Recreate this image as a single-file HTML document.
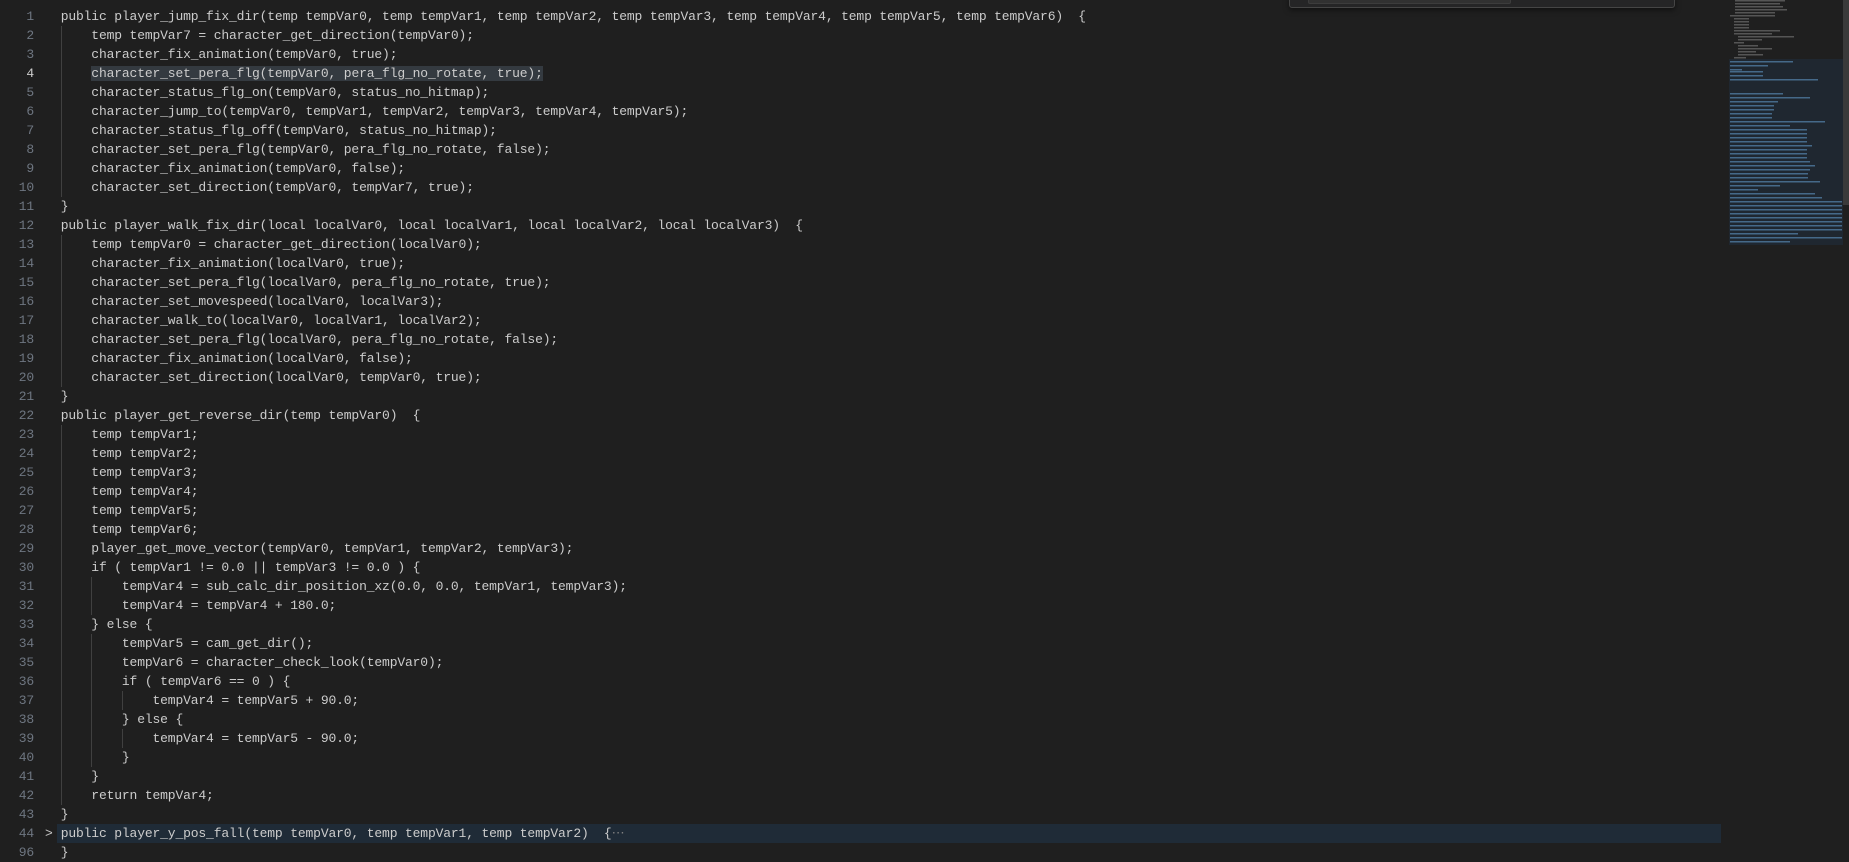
<!DOCTYPE html>
<html><head><meta charset="utf-8"><style>
html,body{margin:0;padding:0;width:1849px;height:855px;overflow:hidden;background:#1f1f1f}
.ed{position:absolute;left:0;top:0;width:1849px;height:855px}
.ln{position:absolute;left:0;width:34px;text-align:right;font:13px/19px "Liberation Mono",monospace;color:#6e7681;letter-spacing:-0.15px}
.ln .a{color:#cccccc}
.code{position:absolute;left:60.7px;top:7px;font:13px/19px "Liberation Mono",monospace;color:#cccccc;letter-spacing:-0.15px}
.code div{height:19px;background-repeat:no-repeat;white-space:pre}
.i1{background-image:linear-gradient(#404040,#404040);background-size:1px 19px;background-position:0 0}
.i2{background-image:linear-gradient(#404040,#404040),linear-gradient(#404040,#404040);background-size:1px 19px,1px 19px;background-position:0 0,30.6px 0}
.i3{background-image:linear-gradient(#404040,#404040),linear-gradient(#404040,#404040),linear-gradient(#404040,#404040);background-size:1px 19px,1px 19px,1px 19px;background-position:0 0,30.6px 0,61.2px 0}
.sel{background:#343a40}
.cur{position:absolute;left:57px;top:824px;width:1664px;height:19px;background:#1f2b37}
</style></head><body><div class="ed">
<div class="cur"></div>
<div class="ln" style="top:7px">1<br>2<br>3<br><span class="a">4</span><br>5<br>6<br>7<br>8<br>9<br>10<br>11<br>12<br>13<br>14<br>15<br>16<br>17<br>18<br>19<br>20<br>21<br>22<br>23<br>24<br>25<br>26<br>27<br>28<br>29<br>30<br>31<br>32<br>33<br>34<br>35<br>36<br>37<br>38<br>39<br>40<br>41<br>42<br>43<br>44<br>96</div>
<div style="position:absolute;left:45px;top:824px;font:13px/19px 'Liberation Mono',monospace;color:#c5c5c5">&gt;</div>
<div class="code"><div>public player_jump_fix_dir(temp tempVar0, temp tempVar1, temp tempVar2, temp tempVar3, temp tempVar4, temp tempVar5, temp tempVar6)  {</div><div class="i1">    temp tempVar7 = character_get_direction(tempVar0);</div><div class="i1">    character_fix_animation(tempVar0, true);</div><div class="i1">    <span class="sel">character_set_pera_flg(tempVar0, pera_flg_no_rotate, true);</span></div><div class="i1">    character_status_flg_on(tempVar0, status_no_hitmap);</div><div class="i1">    character_jump_to(tempVar0, tempVar1, tempVar2, tempVar3, tempVar4, tempVar5);</div><div class="i1">    character_status_flg_off(tempVar0, status_no_hitmap);</div><div class="i1">    character_set_pera_flg(tempVar0, pera_flg_no_rotate, false);</div><div class="i1">    character_fix_animation(tempVar0, false);</div><div class="i1">    character_set_direction(tempVar0, tempVar7, true);</div><div>}</div><div>public player_walk_fix_dir(local localVar0, local localVar1, local localVar2, local localVar3)  {</div><div class="i1">    temp tempVar0 = character_get_direction(localVar0);</div><div class="i1">    character_fix_animation(localVar0, true);</div><div class="i1">    character_set_pera_flg(localVar0, pera_flg_no_rotate, true);</div><div class="i1">    character_set_movespeed(localVar0, localVar3);</div><div class="i1">    character_walk_to(localVar0, localVar1, localVar2);</div><div class="i1">    character_set_pera_flg(localVar0, pera_flg_no_rotate, false);</div><div class="i1">    character_fix_animation(localVar0, false);</div><div class="i1">    character_set_direction(localVar0, tempVar0, true);</div><div>}</div><div>public player_get_reverse_dir(temp tempVar0)  {</div><div class="i1">    temp tempVar1;</div><div class="i1">    temp tempVar2;</div><div class="i1">    temp tempVar3;</div><div class="i1">    temp tempVar4;</div><div class="i1">    temp tempVar5;</div><div class="i1">    temp tempVar6;</div><div class="i1">    player_get_move_vector(tempVar0, tempVar1, tempVar2, tempVar3);</div><div class="i1">    if ( tempVar1 != 0.0 || tempVar3 != 0.0 ) {</div><div class="i2">        tempVar4 = sub_calc_dir_position_xz(0.0, 0.0, tempVar1, tempVar3);</div><div class="i2">        tempVar4 = tempVar4 + 180.0;</div><div class="i1">    } else {</div><div class="i2">        tempVar5 = cam_get_dir();</div><div class="i2">        tempVar6 = character_check_look(tempVar0);</div><div class="i2">        if ( tempVar6 == 0 ) {</div><div class="i3">            tempVar4 = tempVar5 + 90.0;</div><div class="i2">        } else {</div><div class="i3">            tempVar4 = tempVar5 - 90.0;</div><div class="i2">        }</div><div class="i1">    }</div><div class="i1">    return tempVar4;</div><div>}</div><div>public player_y_pos_fall(temp tempVar0, temp tempVar1, temp tempVar2)  {<span style="color:#808080">&#8943;</span></div><div>}</div></div>
<div style="position:absolute;left:1289px;top:-4px;width:384px;height:10px;background:#252526;border:1px solid #454545;border-radius:3px;box-shadow:0 2px 6px rgba(0,0,0,.5)"></div>
<div style="position:absolute;left:1308px;top:-2px;width:201px;height:4px;background:#313131;border:1px solid #3c3c3c;border-radius:2px"></div>
<svg style="position:absolute;left:1727px;top:0" width="122" height="855">
<g fill="#7a7a7a" opacity=".6">
<rect x="8" y="0" width="50" height="1.5"/><rect x="8" y="3" width="45" height="1.5"/><rect x="8" y="6" width="48" height="1.5"/><rect x="8" y="9" width="52" height="1.5"/><rect x="8" y="12" width="40" height="1.5"/>
<rect x="3" y="15" width="45" height="1.5"/><rect x="7" y="18" width="15" height="1.5"/><rect x="7" y="21" width="15" height="1.5"/><rect x="7" y="24" width="15" height="1.5"/><rect x="7" y="27" width="15" height="1.5"/>
<rect x="7" y="30" width="46" height="1.5"/><rect x="7" y="33" width="38" height="1.5"/><rect x="11" y="36" width="56" height="1.5"/><rect x="11" y="39" width="24" height="1.5"/><rect x="7" y="42" width="10" height="1.5"/>
<rect x="11" y="45" width="20" height="1.5"/><rect x="11" y="48" width="34" height="1.5"/><rect x="11" y="51" width="18" height="1.5"/><rect x="11" y="54" width="25" height="1.5"/><rect x="7" y="57" width="12" height="1.5"/>
</g>
<rect x="2" y="59" width="114" height="186" fill="#1f2b37" opacity=".7"/>
<g fill="#4f7aa0" opacity=".8">
<rect x="3" y="61" width="63" height="1.5"/><rect x="3" y="65" width="38" height="1.5"/><rect x="3" y="69" width="12" height="1.5"/><rect x="3" y="71" width="33" height="1.5"/><rect x="3" y="75" width="33" height="1.5"/><rect x="3" y="79" width="88" height="1.5"/>
<rect x="3" y="93" width="53" height="1.5"/><rect x="3" y="97" width="80" height="1.5"/><rect x="3" y="101" width="48" height="1.5"/><rect x="3" y="105" width="44" height="1.5"/><rect x="3" y="109" width="44" height="1.5"/><rect x="3" y="113" width="42" height="1.5"/><rect x="3" y="117" width="42" height="1.5"/>
<rect x="3" y="121" width="95" height="1.5"/><rect x="3" y="125" width="60" height="1.5"/><rect x="3" y="129" width="77" height="1.5"/><rect x="3" y="133" width="77" height="1.5"/><rect x="3" y="137" width="77" height="1.5"/><rect x="3" y="141" width="77" height="1.5"/><rect x="3" y="145" width="82" height="1.5"/>
<rect x="3" y="149" width="77" height="1.5"/><rect x="3" y="153" width="77" height="1.5"/><rect x="3" y="157" width="77" height="1.5"/><rect x="3" y="161" width="80" height="1.5"/><rect x="3" y="165" width="85" height="1.5"/><rect x="3" y="169" width="80" height="1.5"/><rect x="3" y="173" width="78" height="1.5"/>
<rect x="3" y="177" width="78" height="1.5"/><rect x="3" y="181" width="90" height="1.5"/><rect x="3" y="185" width="50" height="1.5"/><rect x="3" y="189" width="28" height="1.5"/><rect x="3" y="193" width="85" height="1.5"/><rect x="3" y="197" width="92" height="1.5"/>
<rect x="3" y="201" width="112" height="1.5"/><rect x="3" y="205" width="112" height="1.5"/><rect x="3" y="209" width="112" height="1.5"/><rect x="3" y="213" width="112" height="1.5"/><rect x="3" y="217" width="112" height="1.5"/><rect x="3" y="221" width="112" height="1.5"/>
<rect x="3" y="225" width="112" height="1.5"/><rect x="3" y="229" width="112" height="1.5"/><rect x="3" y="233" width="68" height="1.5"/><rect x="3" y="237" width="112" height="1.5"/><rect x="3" y="241" width="60" height="1.5"/>
</g>
<rect x="116" y="0" width="6" height="205" fill="#3a3a3a"/>
</svg>
</div></body></html>
